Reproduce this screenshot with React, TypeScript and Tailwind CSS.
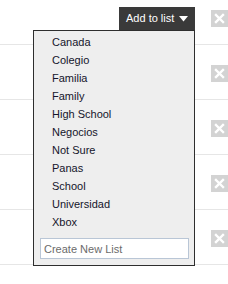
const lists = [
  'Canada',
  'Colegio',
  'Familia',
  'Family',
  'High School',
  'Negocios',
  'Not Sure',
  'Panas',
  'School',
  'Universidad',
  'Xbox',
];

function CloseButton() {
  return (
    <button className="flex h-[17px] w-[17px] shrink-0 items-center justify-center bg-[#d3d3d3]">
      <svg width="11" height="11" viewBox="0 0 11 11">
        <path d="M2 2 L9 9 M9 2 L2 9" stroke="#fff" strokeWidth="2.4" strokeLinecap="square" />
      </svg>
    </button>
  );
}

function Row() {
  return (
    <div className="flex h-[55px] shrink-0 border-b border-[#e6e6e6]">
      <div className="flex-1" />
      <div className="flex w-[25px] items-start">
        <div className="mt-[13px] h-[31px] w-px bg-[#e3e3e3]" />
        <div className="ml-[8px] mt-[20px]">
          <CloseButton />
        </div>
      </div>
    </div>
  );
}

export default function App() {
  return (
    <div
      className="relative h-[284px] w-[228px] overflow-hidden bg-white"
      style={{ fontFamily: '"Liberation Sans", Arial, sans-serif' }}
    >
      <div className="-mt-[10px] flex flex-col">
        <Row />
        <Row />
        <Row />
        <Row />
        <Row />
        <Row />
      </div>

      <button className="absolute left-[119px] top-[7px] flex h-[23px] w-[76px] items-center gap-[5px] bg-[#3a3a3a] pl-[7px] text-[11px] text-white">
        Add to list
        <svg width="9" height="6" viewBox="0 0 9 6">
          <path d="M0 0 H9 L4.5 5.5 Z" fill="#fff" />
        </svg>
      </button>

      <div className="absolute left-[33px] top-[30px] w-[162px] border border-[#2e2e2e] bg-[#eeeeee] pb-[6px] pl-[6px] pr-[5px] pt-[2px]">
        <ul>
          {lists.map((name) => (
            <li key={name} className="h-[18px] pl-[12px] text-[11px] leading-[18px] text-[#15152b]">
              {name}
            </li>
          ))}
        </ul>
        <input
          placeholder="Create New List"
          className="mt-[7px] block h-[21px] w-full border border-[#b9c6d6] bg-white px-[3px] text-[11px] text-[#333] outline-none placeholder:text-[#6b6b6b]"
        />
      </div>
    </div>
  );
}
